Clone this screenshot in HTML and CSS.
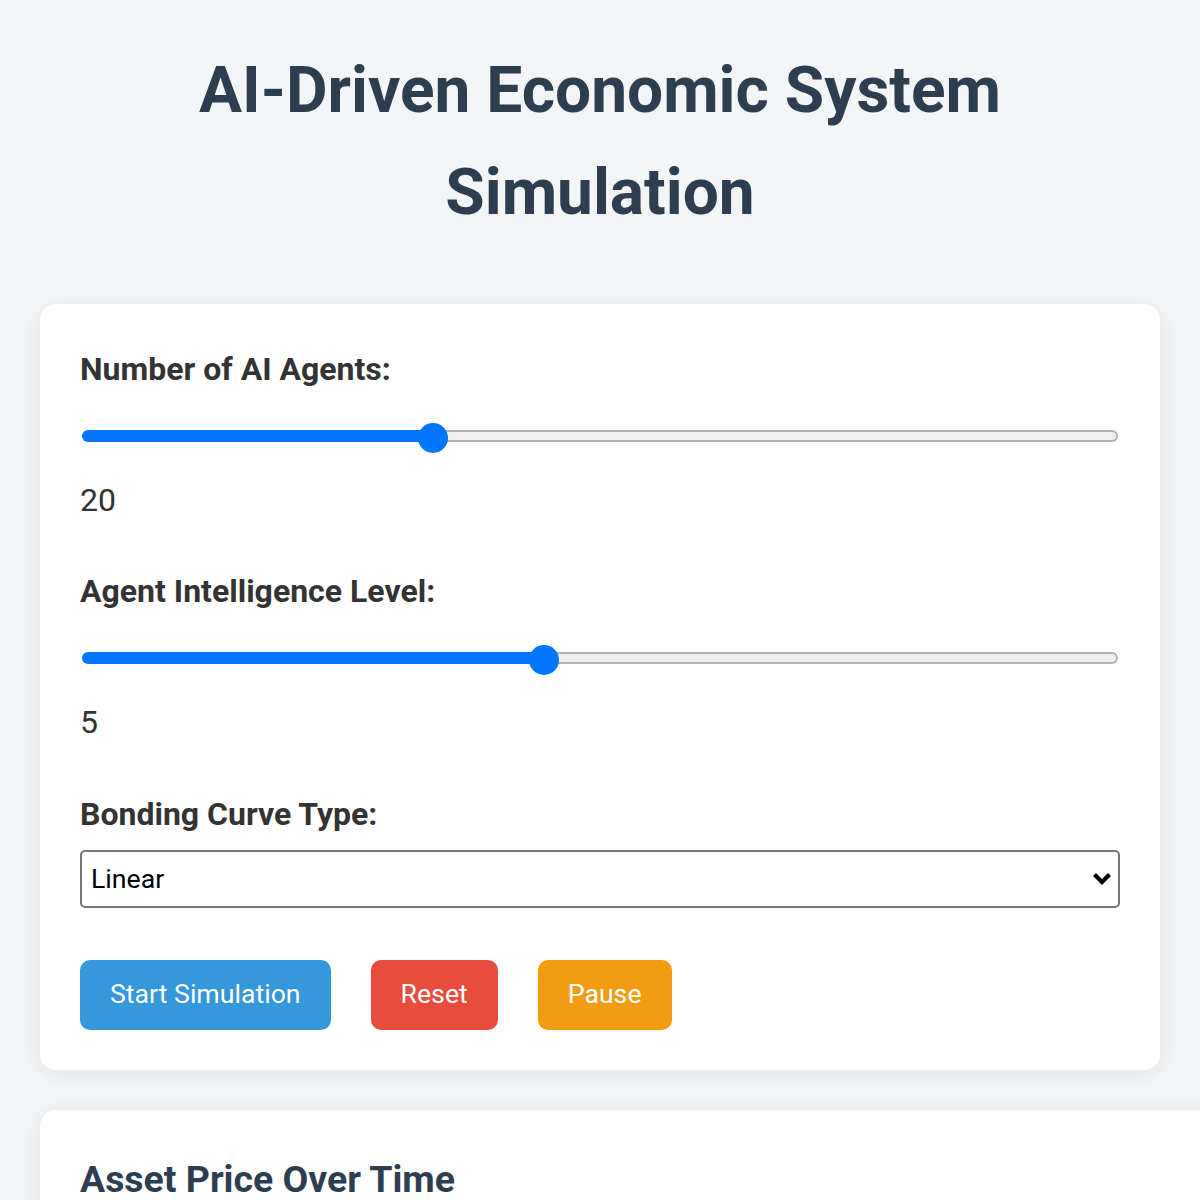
FILE: index.html
```html
<!DOCTYPE html>
<html lang="en">
<head>
<meta charset="utf-8">
<title>AI-Driven Economic System Simulation</title>
<link rel="stylesheet" href="styles.css">
</head>
<body>
  <h1 class="page-title">AI-Driven Economic System Simulation</h1>

  <section class="card controls">
    <div class="control-group">
      <label class="control-label" for="agents">Number of AI Agents:</label>
      <input class="slider" id="agents" type="range" min="5" max="50" value="20" style="--fill:33.8%">
      <span class="control-value">20</span>
    </div>

    <div class="control-group">
      <label class="control-label" for="intel">Agent Intelligence Level:</label>
      <input class="slider" id="intel" type="range" min="1" max="10" value="5" style="--fill:44.6%">
      <span class="control-value">5</span>
    </div>

    <div class="control-group">
      <label class="control-label" for="curve">Bonding Curve Type:</label>
      <div class="select-wrap">
        <select class="select" id="curve">
          <option>Linear</option>
          <option>Exponential</option>
          <option>Logarithmic</option>
        </select>
        <svg class="select-arrow" width="20" height="14" viewBox="0 0 20 14" aria-hidden="true">
          <polyline points="2.5,2.5 10,10 17.5,2.5" fill="none" stroke="#000" stroke-width="4.2"/>
        </svg>
      </div>
    </div>

    <div class="button-row">
      <button class="btn btn-start" type="button">Start Simulation</button>
      <button class="btn btn-reset" type="button">Reset</button>
      <button class="btn btn-pause" type="button">Pause</button>
    </div>
  </section>

  <section class="card chart-card">
    <h3 class="chart-title">Asset Price Over Time</h3>
    <div class="chart-area"></div>
  </section>
</body>
</html>
```
FILE: styles.css
```css
html {
  background: #f4f5f7;
}

body {
  margin: 0;
  padding: 40px;
  background: #f4f5f7;
  font-family: Roboto, "Liberation Sans", Arial, sans-serif;
  font-size: 32px;
  line-height: 1.6;
  color: #333;
}

.page-title {
  margin: 0 0 59px;
  padding: 0 16px;
  font-size: 64px;
  font-weight: 700;
  line-height: 1.6;
  text-align: center;
  color: #2c3e50;
}

.card {
  background: #fff;
  border-radius: 16px;
  padding: 40px;
  box-shadow: 0 4px 24px rgba(0, 0, 0, 0.08);
}

.control-group {
  margin-bottom: 40px;
}

.control-label {
  display: block;
  margin-bottom: 10px;
  font-weight: 700;
  color: #333;
}

.control-value {
  display: block;
  color: #333;
}

.slider {
  -webkit-appearance: none;
  appearance: none;
  display: block;
  width: calc(100% - 4px);
  height: 16px;
  margin: 33px 2px 31px;
  padding: 0;
  background: transparent;
}

.slider::-webkit-slider-runnable-track {
  height: 12px;
  border: 2px solid transparent;
  border-radius: 8px;
  background:
    linear-gradient(to right, #0075ff var(--fill), #efefef var(--fill)) padding-box,
    linear-gradient(to right, #0075ff var(--fill), #b2b2b2 var(--fill)) border-box;
}

.slider::-webkit-slider-thumb {
  -webkit-appearance: none;
  appearance: none;
  width: 30px;
  height: 30px;
  margin-top: -9px;
  border: 0;
  border-radius: 50%;
  background: #0075ff;
}

.select-wrap {
  position: relative;
}

.select {
  -webkit-appearance: none;
  appearance: none;
  display: block;
  box-sizing: border-box;
  width: 100%;
  height: 58px;
  margin: 0;
  padding: 0 40px 0 9px;
  border: 2px solid #767676;
  border-radius: 5px;
  background: #fff;
  font-family: Roboto, "Liberation Sans", Arial, sans-serif;
  font-size: 26.67px;
  color: #000;
}

.select-arrow {
  position: absolute;
  right: 8px;
  top: 22px;
  pointer-events: none;
}

.button-row {
  display: flex;
  gap: 40px;
  margin-top: 52px;
}

.btn {
  padding: 19px 30px 20px;
  border: 0;
  border-radius: 10px;
  font-family: Roboto, "Liberation Sans", Arial, sans-serif;
  font-size: 26.67px;
  line-height: 31px;
  color: #fff;
  cursor: pointer;
}

.btn-start {
  background: #3498db;
}

.btn-reset {
  background: #e74c3c;
}

.btn-pause {
  background: #f39c12;
}

.chart-card {
  margin-top: 40px;
  width: max-content;
  min-width: 100%;
}

.chart-title {
  margin: 0 0 20px;
  font-size: 37.44px;
  font-weight: 700;
  line-height: 1.6;
  color: #2c3e50;
}

.chart-area {
  width: 1600px;
  height: 800px;
}
```
